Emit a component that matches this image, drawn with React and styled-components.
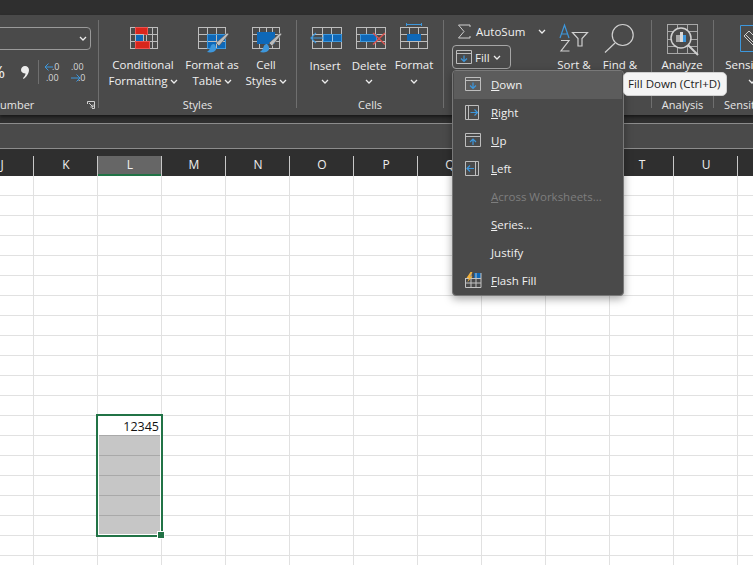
import React from 'react';
import styled, { createGlobalStyle } from 'styled-components';

const GlobalStyle = createGlobalStyle`
  html, body {
    margin: 0;
    padding: 0;
    background: #fff;
    overflow: hidden;
  }
  * { box-sizing: border-box; }
`;

const FONT = '"Open Sans", "Noto Sans", "Liberation Sans", sans-serif';
const BLUE = '#0e68b8';
const LIGHT_BLUE = '#3d97dc';
const LINE = '#bdbdbd';

const Page = styled.div`
  position: relative;
  width: 753px;
  height: 565px;
  overflow: hidden;
  font-family: ${FONT};
  font-size: 11.5px;
  color: #f0f0f0;
`;

const TitleStrip = styled.div`
  height: 15px;
  background: #2f2f2f;
`;

const Ribbon = styled.div`
  display: flex;
  height: 100px;
  overflow: hidden;
  background: #4a4a4a;
  box-shadow: 0 2px 3px rgba(0, 0, 0, 0.5);
  position: relative;
`;

const Divider = styled.div`
  flex: none;
  width: 1px;
  height: 88px;
  margin-top: 5px;
  background: #6f6f6f;
`;

const Group = styled.div`
  flex: none;
  width: ${(p) => p.$width}px;
  display: flex;
  flex-direction: column;
`;

const GroupBody = styled.div`
  height: 82px;
  display: flex;
  padding-left: ${(p) => p.$pad || 0}px;
`;

const GroupLabel = styled.div`
  position: relative;
  height: 16px;
  line-height: 16px;
  font-size: 11px;
  text-align: ${(p) => p.$align || 'center'};
  padding-left: ${(p) => p.$pad || 0}px;
  white-space: nowrap;
  color: #e6e6e6;
`;

const Launcher = styled.svg`
  position: absolute;
  right: 3px;
  top: 4px;
`;

const RibbonButton = styled.div`
  flex: none;
  width: ${(p) => p.$width}px;
  display: flex;
  flex-direction: column;
  align-items: center;
  padding-top: 8px;
  white-space: nowrap;
`;

const IconBox = styled.div`
  height: 34px;
  display: flex;
  justify-content: center;
`;

const ButtonLine = styled.div`
  height: 16px;
  line-height: 16px;
  display: flex;
  align-items: center;
  gap: 2px;
  transform: translateY(${(p) => p.$shift || 0}px);
`;

const Caret = styled.svg`
  flex: none;
  display: block;
`;

const NumberGroup = styled.div`
  padding-top: 12px;
  display: flex;
  flex-direction: column;
  gap: 10px;
`;

const Combo = styled.div`
  width: 101px;
  height: 23px;
  margin-left: -10px;
  border: 1px solid #9a9a9a;
  border-radius: 4px;
  display: flex;
  align-items: center;
  justify-content: flex-end;
  padding-right: 3px;
`;

const NumberRow = styled.div`
  display: flex;
  align-items: center;
  height: 24px;
`;

const Percent = styled.span`
  width: 5px;
  overflow: hidden;
  direction: rtl;
  font-size: 17px;
  line-height: 22px;
  margin-right: 16px;
`;

const CommaMark = styled.svg`
  flex: none;
  display: block;
`;

const RowRule = styled.div`
  width: 1px;
  height: 24px;
  background: #6f6f6f;
  margin: 0 5px 0 9px;
`;

const Spacer = styled.span`
  flex: none;
  width: ${(p) => p.$width}px;
`;

const EditColumn = styled.div`
  flex: none;
  width: 99px;
  padding-top: 8px;
`;

const AutoSumRow = styled.div`
  display: flex;
  align-items: center;
  height: 16px;
  padding-left: 5px;
  gap: 5px;
`;

const AutoSumText = styled.span`
  margin-right: 8px;
`;

const FillButton = styled.div`
  width: 59px;
  height: 24px;
  margin-top: 6px;
  padding-left: 3px;
  border: 1px solid #a6a6a6;
  border-radius: 4px;
  display: flex;
  align-items: center;
  gap: 3px;
`;

const FormulaBar = styled.div`
  height: 34px;
  background: #2f2f2f;
  padding-top: 8px;
`;

const FormulaInner = styled.div`
  height: 26px;
  background: #4a4a4a;
  border-top: 1px solid #8c8c8c;
  border-bottom: 1px solid #8c8c8c;
`;

const HeaderRow = styled.div`
  display: flex;
  height: 27px;
  margin-left: -30px;
  background: #2f2f2f;
`;

const HeaderCell = styled.div`
  flex: none;
  width: 64px;
  display: flex;
  align-items: center;
  justify-content: center;
  padding-top: 5px;
  font-size: 12px;
  position: relative;
  color: #f0f0f0;
  background: ${(p) => (p.$active ? 'linear-gradient(#2f2f2f 7px, #666 7px)' : 'transparent')};
  border-bottom: 2px solid ${(p) => (p.$active ? '#217346' : '#2f2f2f')};

  &::after {
    content: '';
    position: absolute;
    right: 0;
    top: 7px;
    bottom: -2px;
    width: 1px;
    background: #c8c8c8;
  }
`;

const Sheet = styled.div`
  display: grid;
  grid-template-columns: repeat(13, 64px);
  grid-auto-rows: 20px;
  margin-left: -30px;
`;

const Cell = styled.div`
  border-right: 1px solid ${(p) => (p.$filled ? '#a9a9a9' : '#e1e1e1')};
  border-bottom: 1px solid ${(p) => (p.$filled || p.$above ? '#a9a9a9' : '#e1e1e1')};
  background: ${(p) => (p.$filled ? '#c6c6c6' : '#fff')};
  font-size: 12.5px;
  line-height: 21px;
  color: #111;
  text-align: right;
  padding-right: 2px;
`;

const Selection = styled.div`
  position: absolute;
  left: 96px;
  top: 414px;
  width: 67px;
  height: 123px;
  border: 2px solid #217346;
  box-shadow: inset 0 0 0 1px #fff;
  pointer-events: none;
`;

const Handle = styled.div`
  position: absolute;
  right: -3px;
  bottom: -3px;
  width: 6px;
  height: 6px;
  background: #217346;
  outline: 1px solid #fff;
`;

const Menu = styled.div`
  position: absolute;
  left: 452px;
  top: 70px;
  width: 172px;
  height: 226px;
  background: #4a4a4a;
  border: 1px solid #787878;
  border-radius: 4px;
  box-shadow: 0 3px 8px rgba(0, 0, 0, 0.35);
`;

const MenuItem = styled.div`
  height: 28px;
  margin: 0 1px;
  padding-bottom: 2px;
  display: flex;
  align-items: center;
  background: ${(p) => (p.$active ? '#5c5c5c' : 'transparent')};
  color: ${(p) => (p.$disabled ? '#7e7e7e' : '#f0f0f0')};
`;

const MenuIcon = styled.div`
  flex: none;
  width: 37px;
  padding-left: 11px;
  display: flex;
`;

const Tooltip = styled.div`
  position: absolute;
  left: 623px;
  top: 72px;
  width: 104px;
  height: 24px;
  padding-left: 4px;
  line-height: 22px;
  font-size: 11.5px;
  white-space: nowrap;
  color: #222;
  background: #f4f4f4;
  border: 1px solid #cfcfcf;
  border-radius: 5px;
`;

const ChevronDown = () => (
  <Caret width="8" height="5" viewBox="0 0 8 5">
    <path d="M1 1l3 3 3-3" fill="none" stroke="#ececec" strokeWidth="1.3" />
  </Caret>
);

// icons are drawn in page coordinates, the viewBox is centred on the button
const Frame = ({ cx, children }) => (
  <svg width="36" height="34" viewBox={`${cx - 18} 23 36 34`} fill="none">
    {children}
  </svg>
);

const TableLines = ({ x, y, w, h, cols, rows, color = LINE }) => {
  const parts = [];
  for (let i = 1; i < cols; i++) parts.push(`M${x + Math.round((w * i) / cols)} ${y}v${h}`);
  for (let i = 1; i < rows; i++) parts.push(`M${x} ${y + Math.round((h * i) / rows)}h${w}`);
  return (
    <g stroke={color} strokeWidth="1">
      <rect x={x} y={y} width={w} height={h} />
      <path d={parts.join('')} />
    </g>
  );
};

const Brush = ({ dx }) => (
  <g transform={`translate(${dx} 0)`}>
    <path d="M229 34l-10 12-3-3 11-10z" fill="#bcbcbc" stroke="#4a4a4a" strokeWidth="0.6" />
    <path d="M214 44c-2 0-3 1-3.500 3-.5 2-2 4-3.500 5 4 1 8 0 9-2.500 .5-2-.5-4.500-2-5.500z" fill={LIGHT_BLUE} />
  </g>
);

const ConditionalIcon = () => (
  <Frame cx={143}>
    <TableLines x={130.5} y={27.5} w={27} h={21} cols={5} rows={3} />
    <rect x={135.5} y={27.5} width={12} height={7} fill="#d9261c" stroke="#ef5350" />
    <rect x={135.5} y={34.5} width={8} height={7} fill={BLUE} stroke={LINE} />
    <rect x={135.5} y={41.5} width={14} height={7} fill="#d9261c" stroke="#ef5350" />
  </Frame>
);

const FormatTableIcon = () => (
  <Frame cx={212}>
    <rect x={207} y={34} width={19} height={15} fill={BLUE} />
    <TableLines x={198.5} y={27.5} w={27} h={21} cols={3} rows={3} />
    <path d="M207.500 34.500h18v14h-18z" stroke={LIGHT_BLUE} />
    <Brush dx={0} />
  </Frame>
);

const CellStylesIcon = () => (
  <Frame cx={266}>
    <TableLines x={252.5} y={27.5} w={27} h={21} cols={4} rows={3} />
    <rect x={257} y={32} width={18} height={12} fill={BLUE} />
    <Brush dx={53} />
  </Frame>
);

const InsertIcon = () => (
  <Frame cx={325}>
    <TableLines x={312.5} y={27.5} w={29} h={21} cols={3} rows={3} />
    <rect x={323.500} y={34.500} width={18} height={7} fill={BLUE} stroke={LIGHT_BLUE} />
    <path d="M332.500 34.500v7" stroke="#9cc9ec" />
    <path d="M324 38h-13m5-5l-5 5 5 5" stroke={LIGHT_BLUE} strokeWidth="1.2" />
  </Frame>
);

const DeleteIcon = () => (
  <Frame cx={369}>
    <TableLines x={356.5} y={27.5} w={29} h={21} cols={3} rows={3} />
    <rect x={360.500} y={34.500} width={16} height={7} fill={BLUE} stroke={LIGHT_BLUE} />
    <path d="M373 33l12 11.500m0-11.500l-12 11.500" stroke="#d9534f" strokeWidth="1.500" />
  </Frame>
);

const FormatIcon = () => (
  <Frame cx={414}>
    <path d="M406.500 23v3m0-1.500h15m0-1.500v3" stroke={LIGHT_BLUE} />
    <TableLines x={400.5} y={27.5} w={27} h={21} cols={3} rows={3} />
    <rect x={407} y={34} width={14} height={7} fill={BLUE} />
  </Frame>
);

const SortIcon = () => (
  <svg width="36" height="34" viewBox="556 23 36 34" fill="none">
    <path d="M560 38l4.500-13 4.500 13m-7.500-4h6" stroke={LIGHT_BLUE} strokeWidth="1.200" />
    <path d="M561 40.500h8l-8 10.500h8.500" stroke="#cfcfcf" strokeWidth="1.200" />
    <path d="M572.500 32.500h15l-5.500 6v7.500h-4v-7.500z" stroke="#cfcfcf" strokeWidth="1.200" />
  </svg>
);

const FindIcon = () => (
  <svg width="36" height="34" viewBox="602 23 36 34" fill="none">
    <circle cx="622.700" cy="35" r="10.500" stroke="#d0d0d0" strokeWidth="1.200" />
    <path d="M615 43l-10 9.500" stroke="#d0d0d0" strokeWidth="1.200" />
  </svg>
);

const AnalyzeIcon = () => (
  <svg width="36" height="34" viewBox="664 21 36 34" fill="none">
    <TableLines x={667.5} y={22.5} w={30} h={29} cols={3} rows={4} color="#a8a8a8" />
    <circle cx="681" cy="36" r="10" fill="#4a4a4a" stroke="#d0d0d0" strokeWidth="1.500" />
    <rect x="676" y="33" width="4" height="7" fill="#a8a8a8" />
    <rect x="680" y="30" width="3" height="10" fill="#d8d8d8" />
    <rect x="683" y="33" width="3" height="7" fill={LIGHT_BLUE} />
    <path d="M688 43l10 10" stroke="#d0d0d0" strokeWidth="2" />
  </svg>
);

const SensitivityIcon = () => (
  <svg width="30" height="34" viewBox="737 23 30 34" fill="none">
    <path d="M740.500 25.500h20v26h-20z" stroke={LIGHT_BLUE} />
    <path d="M746 35l8 8m-5-12l9 9-5 5-9-9z" stroke="#d0d0d0" />
  </svg>
);

const SigmaIcon = () => (
  <svg width="14" height="15" viewBox="0 0 14 15" fill="none">
    <path d="M13 3V1H1.500l5.500 6.500L1.500 14H13v-2" stroke="#cfcfcf" />
  </svg>
);

const FillIcon = ({ dir }) => {
  const tables = {
    down: <path d="M.5 3.500h15M.5.5h15v13H.5z" stroke="#bdbdbd" />,
    up: <path d="M.5 3.500h15M.5.5h15v13H.5z" stroke="#bdbdbd" />,
    right: <path d="M3.500.5v14M.5.5h13v14H.5z" stroke="#bdbdbd" />,
    left: <path d="M10.500.5v14M.5.5h13v14H.5z" stroke="#bdbdbd" />,
  };
  const arrows = {
    down: 'M8 5.500v6m-3-3l3 3 3-3',
    up: 'M8 12V6M5 9l3-3 3 3',
    right: 'M5.500 7.500h7m-3-3l3 3-3 3',
    left: 'M9 7.500H2m3-3l-3 3 3 3',
  };
  return (
    <svg width="16" height="15" viewBox="0 0 16 15" fill="none">
      {tables[dir]}
      <path d={arrows[dir]} stroke={LIGHT_BLUE} strokeWidth="1.200" />
    </svg>
  );
};

const FlashFillIcon = () => (
  <svg width="17" height="16" viewBox="0 0 17 16" fill="none">
    <rect x="9" y="1" width="7" height="5" fill={BLUE} />
    <path d="M.5 6.500h15.500M.5 11h15.500M6 1v14.500M11 1v14.500M16 1v14.500M.5 6v9.500H16" stroke="#c4c4c4" />
    <path d="M5.500 0L1.500 6h2.500L2.500 10l5-5.500H5L7.500 0z" fill="#f2b33d" />
  </svg>
);

const DecimalIcon = ({ more }) => (
  <svg width="18" height="24" viewBox="0 0 18 24" fill="none">
    <text x={more ? 8 : 1} y="10" fontSize="9" fill="#d8d8d8" fontFamily={FONT}>{more ? '.0' : '.00'}</text>
    <text x={more ? 2 : 8} y="21" fontSize="9" fill="#d8d8d8" fontFamily={FONT}>{more ? '.00' : '.0'}</text>
    {more
      ? <path d="M9 7H1m3.500-3.500L1 7l3.500 3.500" stroke={LIGHT_BLUE} />
      : <path d="M1 18h9m-3.500-3.500L10 18l-3.500 3.500" stroke={LIGHT_BLUE} />}
  </svg>
);

const columns = ['J', 'K', 'L', 'M', 'N', 'O', 'P', 'Q', 'R', 'S', 'T', 'U', 'V'];
const rowCount = 20;

const menuItems = [
  { key: 'down', icon: <FillIcon dir="down" />, mark: 'D', rest: 'own', active: true },
  { key: 'right', icon: <FillIcon dir="right" />, mark: 'R', rest: 'ight' },
  { key: 'up', icon: <FillIcon dir="up" />, mark: 'U', rest: 'p' },
  { key: 'left', icon: <FillIcon dir="left" />, mark: 'L', rest: 'eft' },
  { key: 'across', mark: 'A', rest: 'cross Worksheets...', disabled: true },
  { key: 'series', mark: 'S', rest: 'eries...' },
  { key: 'justify', mark: 'J', rest: 'ustify' },
  { key: 'flash', icon: <FlashFillIcon />, mark: 'F', rest: 'lash Fill' },
];

const Button = ({ width, icon, lines, shift }) => (
  <RibbonButton $width={width}>
    <IconBox>{icon}</IconBox>
    {lines.map((line, i) => (
      <ButtonLine key={i} $shift={line.text ? shift : 0}>
        {line.text}
        {line.caret && <ChevronDown />}
      </ButtonLine>
    ))}
  </RibbonButton>
);

const App = () => {
  return (
    <Page>
      <GlobalStyle />
      <TitleStrip />
      <Ribbon>
        <Group $width={98}>
          <GroupBody>
            <NumberGroup>
              <Combo><ChevronDown /></Combo>
              <NumberRow>
                <Percent>%</Percent>
                <CommaMark width="8" height="13" viewBox="0 0 8 13">
                  <path d="M4 0c2.500 0 4 1.800 4 4 0 3.500-2.500 7-5.500 9L2 12c1.500-1.500 2.500-3 2.500-4.500C2 7.500 0 6 0 4c0-2.300 1.700-4 4-4z" fill="#ececec" />
                </CommaMark>
                <RowRule />
                <DecimalIcon more />
                <Spacer $width={8} />
                <DecimalIcon />
              </NumberRow>
            </NumberGroup>
          </GroupBody>
          <GroupLabel $align="left">
            umber
            <Launcher width="8" height="8" viewBox="0 0 8 8" fill="none">
              <path d="M.5 3V.5H7.500V7.500H5M2 2l4 4M6 3.500V6H3.500" stroke="#d0d0d0" />
            </Launcher>
          </GroupLabel>
        </Group>
        <Divider />
        <Group $width={197}>
          <GroupBody $pad={8}>
            <Button width={72} icon={<ConditionalIcon />} lines={[{ text: 'Conditional' }, { text: 'Formatting', caret: true }]} />
            <Spacer $width={2} />
            <Button width={62} icon={<FormatTableIcon />} lines={[{ text: 'Format as' }, { text: 'Table', caret: true }]} />
            <Button width={46} icon={<CellStylesIcon />} lines={[{ text: 'Cell' }, { text: 'Styles', caret: true }]} />
          </GroupBody>
          <GroupLabel>Styles</GroupLabel>
        </Group>
        <Divider />
        <Group $width={146}>
          <GroupBody $pad={6}>
            <Button width={44} icon={<InsertIcon />} shift={1} lines={[{ text: 'Insert' }, { caret: true }]} />
            <Button width={44} icon={<DeleteIcon />} shift={1} lines={[{ text: 'Delete' }, { caret: true }]} />
            <Button width={46} icon={<FormatIcon />} lines={[{ text: 'Format' }, { caret: true }]} />
          </GroupBody>
          <GroupLabel>Cells</GroupLabel>
        </Group>
        <Divider />
        <Group $width={207}>
          <GroupBody $pad={8}>
            <EditColumn>
              <AutoSumRow>
                <SigmaIcon />
                <AutoSumText>AutoSum</AutoSumText>
                <ChevronDown />
              </AutoSumRow>
              <FillButton>
                <FillIcon dir="down" />
                Fill
                <ChevronDown />
              </FillButton>
            </EditColumn>
            <Button width={46} icon={<SortIcon />} lines={[{ text: 'Sort &' }]} />
            <Button width={46} icon={<FindIcon />} lines={[{ text: 'Find &' }]} />
          </GroupBody>
        </Group>
        <Divider />
        <Group $width={61}>
          <GroupBody>
            <Button width={60} icon={<AnalyzeIcon />} lines={[{ text: 'Analyze' }]} />
          </GroupBody>
          <GroupLabel>Analysis</GroupLabel>
        </Group>
        <Divider />
        <Group $width={70}>
          <GroupBody $pad={8}>
            <RibbonButton $width={60}>
              <IconBox><SensitivityIcon /></IconBox>
              <ButtonLine>Sensitivity</ButtonLine>
              <ButtonLine><ChevronDown /></ButtonLine>
            </RibbonButton>
          </GroupBody>
          <GroupLabel $align="left" $pad={10}>Sensitivity</GroupLabel>
        </Group>
      </Ribbon>
      <FormulaBar>
        <FormulaInner />
      </FormulaBar>
      <HeaderRow>
        {columns.map((c) => (
          <HeaderCell key={c} $active={c === 'L'}>{c}</HeaderCell>
        ))}
      </HeaderRow>
      <Sheet>
        {Array.from({ length: rowCount }).map((_, r) =>
          columns.map((c) => {
            const inColumn = c === 'L';
            return (
              <Cell key={c + r} $filled={inColumn && r >= 13 && r <= 17} $above={inColumn && r === 12}>
                {inColumn && r === 12 ? '12345' : ''}
              </Cell>
            );
          })
        )}
      </Sheet>
      <Selection>
        <Handle />
      </Selection>
      <Menu>
        {menuItems.map((item) => (
          <MenuItem key={item.key} $active={item.active} $disabled={item.disabled}>
            <MenuIcon>{item.icon}</MenuIcon>
            <span><u>{item.mark}</u>{item.rest}</span>
          </MenuItem>
        ))}
      </Menu>
      <Tooltip>Fill Down (Ctrl+D)</Tooltip>
    </Page>
  );
};

export default App;
